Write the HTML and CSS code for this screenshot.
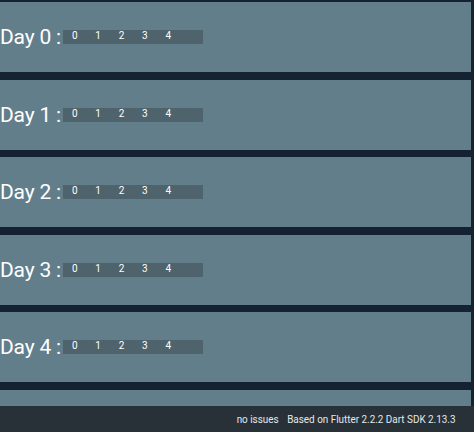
FILE: index.html
```html
<!DOCTYPE html>
<html>
<head>
<meta charset="utf-8">
<link rel="stylesheet" href="styles.css">
</head>
<body>
<div class="app">
  <div class="list">
    <div class="card"><span class="day">Day 0 :</span><div class="hours"><span>0</span><span>1</span><span>2</span><span>3</span><span>4</span></div></div>
    <div class="card"><span class="day">Day 1 :</span><div class="hours"><span>0</span><span>1</span><span>2</span><span>3</span><span>4</span></div></div>
    <div class="card"><span class="day">Day 2 :</span><div class="hours"><span>0</span><span>1</span><span>2</span><span>3</span><span>4</span></div></div>
    <div class="card"><span class="day">Day 3 :</span><div class="hours"><span>0</span><span>1</span><span>2</span><span>3</span><span>4</span></div></div>
    <div class="card"><span class="day">Day 4 :</span><div class="hours"><span>0</span><span>1</span><span>2</span><span>3</span><span>4</span></div></div>
    <div class="card"></div>
  </div>
  <div class="footer"><div class="status"><span>no issues</span><span>Based on Flutter 2.2.2 Dart SDK 2.13.3</span></div></div>
</div>
</body>
</html>
```
FILE: styles.css
```css
html, body {
  margin: 0;
  padding: 0;
}
body {
  width: 474px;
  height: 432px;
  overflow: hidden;
  background: #142231;
  font-family: Roboto, "Liberation Sans", sans-serif;
}
.app {
  display: flex;
  flex-direction: column;
  height: 432px;
}
.list {
  flex: 1;
  overflow: hidden;
  padding: 2px 3px 0 0;
  display: flex;
  flex-direction: column;
  gap: 7.5px;
}
.card {
  flex: 0 0 70px;
  background: #637e8b;
  display: flex;
  align-items: center;
}
.day {
  color: #ffffff;
  font-size: 21px;
  letter-spacing: -0.2px;
  white-space: pre;
}
.hours {
  margin-left: 2px;
  width: 140px;
  height: 14px;
  background: #4f636d;
  display: flex;
  align-items: flex-start;
  padding-left: 9px;
  box-sizing: border-box;
}
.hours span {
  width: 23.4px;
  color: #ffffff;
  font-size: 10px;
  line-height: 11px;
}
.footer {
  flex: 0 0 26px;
  background: #283138;
  display: flex;
  justify-content: flex-end;
  align-items: center;
  padding-right: 19px;
  color: #e6e8ea;
  font-size: 11.5px;
}
.status {
  display: flex;
  gap: 10px;
  transform: scaleX(0.86);
  transform-origin: right center;
}
```
